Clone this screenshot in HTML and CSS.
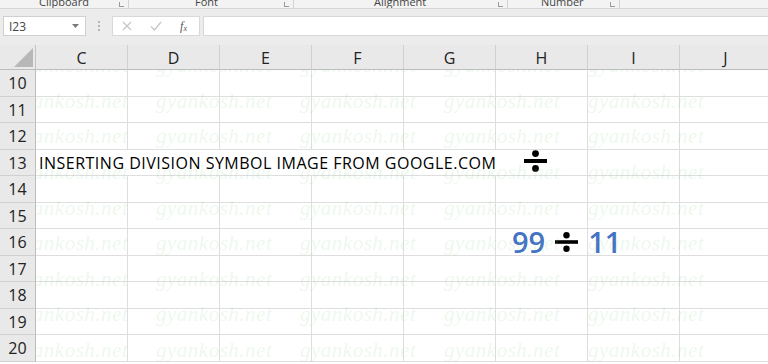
FILE: index.html
```html
<!DOCTYPE html>
<html>
<head>
<meta charset="utf-8">
<link rel="stylesheet" href="styles.css">
</head>
<body>
<div class="app">
  <div class="ribbon">
    <div class="group g1"><span class="glabel">Clipboard</span><span class="launch"></span></div>
    <div class="group g2"><span class="glabel">Font</span><span class="launch"></span></div>
    <div class="group g3"><span class="glabel">Alignment</span><span class="launch"></span></div>
    <div class="group g4"><span class="glabel">Number</span><span class="launch"></span></div>
  </div>
  <div class="fbar">
    <div class="namebox"><span>I23</span><svg class="dd" width="7" height="4" viewBox="0 0 7 4"><path d="M0 0 L7 0 L3.5 4 Z" fill="#7a7a7a"/></svg></div>
    <div class="dots"><i></i><i></i><i></i></div>
    <div class="fbtns">
      <svg width="10" height="10" viewBox="0 0 10 10"><path d="M1 1 L9 9 M9 1 L1 9" stroke="#c4c4c4" stroke-width="1.2"/></svg>
      <svg width="12" height="10" viewBox="0 0 12 10"><path d="M1 5.5 L4.5 9 L11 1" stroke="#c4c4c4" stroke-width="1.2" fill="none"/></svg>
      <span class="fx">f<sub>x</sub></span>
    </div>
    <div class="finput"></div>
  </div>
  <div class="sheet">
    <div class="grid">
      <div class="corner"><div class="tri"></div></div>
      <div class="ch">C</div><div class="ch">D</div><div class="ch">E</div><div class="ch">F</div><div class="ch">G</div><div class="ch">H</div><div class="ch">I</div><div class="ch">J</div>

      <div class="rh">10</div><div class="c"></div><div class="c"></div><div class="c"></div><div class="c"></div><div class="c"></div><div class="c"></div><div class="c"></div><div class="c"></div>
      <div class="rh">11</div><div class="c"></div><div class="c"></div><div class="c"></div><div class="c"></div><div class="c"></div><div class="c"></div><div class="c"></div><div class="c"></div>
      <div class="rh">12</div><div class="c"></div><div class="c"></div><div class="c"></div><div class="c"></div><div class="c"></div><div class="c"></div><div class="c"></div><div class="c"></div>
      <div class="rh">13</div>
      <div class="c span6"><span class="title">INSERTING DIVISION SYMBOL IMAGE FROM GOOGLE.COM</span>
        <svg class="div1" width="23" height="22" viewBox="0 0 23 22"><circle cx="11.5" cy="3.6" r="3.4" fill="#000"/><rect x="0" y="9" width="23" height="4" fill="#000"/><circle cx="11.5" cy="18.4" r="3.4" fill="#000"/></svg>
      </div>
      <div class="c"></div><div class="c"></div>
      <div class="rh">14</div><div class="c"></div><div class="c"></div><div class="c"></div><div class="c"></div><div class="c"></div><div class="c"></div><div class="c"></div><div class="c"></div>
      <div class="rh">15</div><div class="c"></div><div class="c"></div><div class="c"></div><div class="c"></div><div class="c"></div><div class="c"></div><div class="c"></div><div class="c"></div>
      <div class="rh">16</div><div class="c"></div><div class="c"></div><div class="c"></div><div class="c"></div><div class="c"></div>
      <div class="c eq"><span class="num">99</span><svg class="div2" width="23" height="20" viewBox="0 0 23 20"><circle cx="11.5" cy="3.3" r="3.2" fill="#000"/><rect x="0" y="8.2" width="23" height="3.6" fill="#000"/><circle cx="11.5" cy="16.7" r="3.2" fill="#000"/></svg><span class="num n2">11</span></div>
      <div class="c"></div><div class="c"></div>
      <div class="rh">17</div><div class="c"></div><div class="c"></div><div class="c"></div><div class="c"></div><div class="c"></div><div class="c"></div><div class="c"></div><div class="c"></div>
      <div class="rh">18</div><div class="c"></div><div class="c"></div><div class="c"></div><div class="c"></div><div class="c"></div><div class="c"></div><div class="c"></div><div class="c"></div>
      <div class="rh">19</div><div class="c"></div><div class="c"></div><div class="c"></div><div class="c"></div><div class="c"></div><div class="c"></div><div class="c"></div><div class="c"></div>
      <div class="rh">20</div><div class="c"></div><div class="c"></div><div class="c"></div><div class="c"></div><div class="c"></div><div class="c"></div><div class="c"></div><div class="c"></div>
    </div>
    <div class="wm">
      <div class="wm-inner">
        <div class="wline"><span>gyankosh.net</span><span>gyankosh.net</span><span>gyankosh.net</span><span>gyankosh.net</span><span>gyankosh.net</span></div>
        <div class="wline"><span>gyankosh.net</span><span>gyankosh.net</span><span>gyankosh.net</span><span>gyankosh.net</span><span>gyankosh.net</span></div>
        <div class="wline"><span>gyankosh.net</span><span>gyankosh.net</span><span>gyankosh.net</span><span>gyankosh.net</span><span>gyankosh.net</span></div>
        <div class="wline"><span>gyankosh.net</span><span>gyankosh.net</span><span>gyankosh.net</span><span>gyankosh.net</span><span>gyankosh.net</span></div>
        <div class="wline"><span>gyankosh.net</span><span>gyankosh.net</span><span>gyankosh.net</span><span>gyankosh.net</span><span>gyankosh.net</span></div>
        <div class="wline"><span>gyankosh.net</span><span>gyankosh.net</span><span>gyankosh.net</span><span>gyankosh.net</span><span>gyankosh.net</span></div>
        <div class="wline"><span>gyankosh.net</span><span>gyankosh.net</span><span>gyankosh.net</span><span>gyankosh.net</span><span>gyankosh.net</span></div>
        <div class="wline"><span>gyankosh.net</span><span>gyankosh.net</span><span>gyankosh.net</span><span>gyankosh.net</span><span>gyankosh.net</span></div>
        <div class="wline"><span>gyankosh.net</span><span>gyankosh.net</span><span>gyankosh.net</span><span>gyankosh.net</span><span>gyankosh.net</span></div>
      </div>
    </div>
  </div>
</div>
</body>
</html>
```
FILE: styles.css
```css
* { box-sizing: border-box; }
html, body { margin: 0; padding: 0; }
body {
  width: 768px;
  height: 364px;
  overflow: hidden;
  background: #ececec;
  font-family: "Open Sans", "Noto Sans", sans-serif;
}
.app { width: 768px; height: 364px; overflow: hidden; display: flex; flex-direction: column; }

/* ribbon group labels */
.ribbon {
  height: 9px;
  display: flex;
  background: #f3f3f3;
  border-bottom: 1px solid #d6d6d6;
  overflow: hidden;
}
.group {
  position: relative;
  height: 8px;
  border-right: 1px solid #d2d2d2;
  flex: none;
}
.g1 { width: 129px; }
.g2 { width: 165px; }
.g3 { width: 214px; }
.g4 { width: 112px; }
.glabel {
  display: block;
  font-size: 11px;
  line-height: 11px;
  margin-top: -4px;
  color: #444;
  white-space: nowrap;
}
.g1 .glabel { padding-left: 39px; }
.g2 .glabel { padding-left: 66px; }
.g3 .glabel { padding-left: 80px; }
.g4 .glabel { padding-left: 33px; }
.launch {
  position: absolute;
  right: 4px;
  top: 2px;
  width: 5px;
  height: 5px;
  border-left: 1px solid #9a9a9a;
  border-bottom: 1px solid #9a9a9a;
}

/* formula bar */
.fbar {
  height: 36px;
  padding: 7px 0 9px 3px;
  display: flex;
  align-items: stretch;
  background: #ececec;
}
.namebox {
  width: 83px;
  background: #fff;
  border: 1px solid #d0d0d0;
  display: flex;
  align-items: center;
  justify-content: space-between;
  padding: 0 6px 0 5px;
  font-size: 12px;
  color: #444;
}
.dd { display: block; }
.dots {
  width: 26px;
  display: flex;
  flex-direction: column;
  align-items: center;
  justify-content: center;
  gap: 2px;
}
.dots i { display: block; width: 2px; height: 2px; background: #b5b5b5; }
.fbtns {
  width: 88px;
  background: #fff;
  border: 1px solid #d8d8d8;
  display: flex;
  align-items: center;
  justify-content: space-between;
  padding: 0 12px 0 9px;
}
.fbtns svg { display: block; }
.fx {
  font-family: "Liberation Serif", serif;
  font-style: italic;
  font-size: 12px;
  color: #555;
}
.fx sub { font-size: 8px; vertical-align: -1px; }
.finput {
  flex: 1;
  margin-left: 3px;
  background: #fff;
  border: 1px solid #d8d8d8;
  border-right: none;
}

/* sheet */
.sheet { position: relative; flex: 1; background: #fff; }
.grid {
  display: grid;
  grid-template-columns: 36px repeat(8, 92px);
  grid-template-rows: 25px repeat(11, 26.5px);
  background: #fff;
}
.corner {
  background: #e9e9e9;
  border-right: 1px solid #c4c4c4;
  border-bottom: 1px solid #bcbcbc;
  position: relative;
}
.tri {
  position: absolute;
  right: 2px;
  bottom: 2px;
  width: 19px;
  height: 19px;
  background: #b8b8b8;
  clip-path: polygon(100% 0, 100% 100%, 0 100%);
}
.ch {
  background: #e9e9e9;
  border-right: 1px solid #d0d0d0;
  border-bottom: 1px solid #bcbcbc;
  display: flex;
  align-items: center;
  justify-content: center;
  font-size: 16px;
  color: #222;
  padding-top: 1px;
}
.rh {
  background: #e9e9e9;
  border-right: 1px solid #bcbcbc;
  border-bottom: 1px solid #d0d0d0;
  display: flex;
  align-items: center;
  justify-content: center;
  font-size: 16px;
  color: #222;
  padding-top: 1px;
}
.c {
  border-right: 1px solid #dedede;
  border-bottom: 1px solid #dedede;
}
.span6 {
  grid-column: span 6;
  display: flex;
  align-items: center;
  white-space: nowrap;
  padding-left: 3px;
}
.title {
  font-size: 16px;
  letter-spacing: 0.5px;
  color: #000;
  padding-top: 1px;
}
.div1 { display: block; margin-left: 28px; margin-top: -2px; }
.eq {
  display: flex;
  align-items: center;
  white-space: nowrap;
  padding-left: 16px;
  overflow: visible;
}
.num {
  font-size: 29px;
  font-weight: 600;
  line-height: 26px;
  color: #4472c4;
  padding-top: 1px;
}
.div2 { display: block; flex: none; margin: 0 10px 0 10px; }
.n2 { margin-left: 0; }

/* watermark */
.wm {
  position: absolute;
  left: 36px;
  top: 25px;
  right: 0;
  bottom: 0;
  overflow: hidden;
  pointer-events: none;
}
.wm-inner {
  margin-top: -22px;
  margin-left: -24px;
  display: flex;
  flex-direction: column;
}
.wline {
  height: 35.6px;
  display: flex;
  gap: 34px;
  align-items: center;
}
.wline span {
  display: block;
  width: 110px;
  flex: none;
  font-family: "Liberation Serif", serif;
  font-style: italic;
  font-size: 21px;
  letter-spacing: 0.5px;
  color: rgba(120, 200, 120, 0.15);
  white-space: nowrap;
}
```
